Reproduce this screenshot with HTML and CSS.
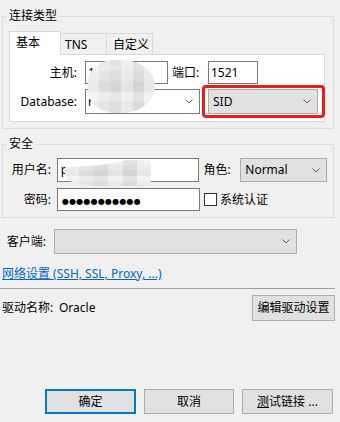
FILE: index.html
```html
<!DOCTYPE html>
<html lang="zh-CN">

<head>
  <meta charset="UTF-8">
  <title>连接设置</title>
  <link rel="stylesheet" href="styles.css">
</head>

<body>
  <div class="dialog">
    <!-- 连接类型 -->
    <fieldset class="group conn">
      <legend>连接类型</legend>
      <div class="tabs">
        <span class="tab active">基本</span>
        <span class="tab tns">TNS</span>
        <span class="tab">自定义</span>
      </div>
      <div class="panel">
        <div class="row">
          <span class="lbl">主机:</span>
          <div class="field host">1</div>
          <span class="port-lbl">端口:</span>
          <div class="field port">1521</div>
        </div>
        <div class="row">
          <span class="lbl">Database:</span>
          <div class="combo edit db"><span>r</span>
            <svg width="8" height="5" viewBox="0 0 8 5"><path d="M0.5 0.5 L4 4 L7.5 0.5" fill="none" stroke="#606060" /></svg>
          </div>
          <div class="combo sid mark"><span>SID</span>
            <svg width="8" height="5" viewBox="0 0 8 5"><path d="M0.5 0.5 L4 4 L7.5 0.5" fill="none" stroke="#606060" /></svg>
          </div>
        </div>
        <div class="blur blur-host"></div>
      </div>
    </fieldset>

    <!-- 安全 -->
    <fieldset class="group safe">
      <legend>安全</legend>
      <div class="row user-row">
        <span class="lbl2">用户名:</span>
        <div class="field user">p</div>
        <span class="role-lbl">角色:</span>
        <div class="combo role"><span>Normal</span>
          <svg width="8" height="5" viewBox="0 0 8 5"><path d="M0.5 0.5 L4 4 L7.5 0.5" fill="none" stroke="#606060" /></svg>
        </div>
        <div class="blur blur-user"></div>
      </div>
      <div class="row pass-row">
        <span class="lbl2">密码:</span>
        <div class="field pass"><span class="dots">●●●●●●●●●●●</span></div>
        <span class="check"></span>
        <span class="check-lbl">系统认证</span>
      </div>
    </fieldset>

    <!-- 客户端 -->
    <div class="row client-row">
      <span class="lbl3">客户端:</span>
      <div class="combo client"><span></span>
        <svg width="8" height="5" viewBox="0 0 8 5"><path d="M0.5 0.5 L4 4 L7.5 0.5" fill="none" stroke="#606060" /></svg>
      </div>
    </div>
    <a class="link" href="#">网络设置 (SSH, SSL, Proxy, ...)</a>
    <div class="sep"></div>
    <div class="row driver-row">
      <span class="lbl4">驱动名称:</span>
      <span>Oracle</span>
      <button class="btn edit-btn">编辑驱动设置</button>
    </div>

    <!-- operation -->
    <div class="actions">
      <button class="btn ok">确定</button>
      <button class="btn">取消</button>
      <button class="btn test"><u>测</u>试链接 ...</button>
    </div>
  </div>
</body>

</html>
```

FILE: styles.css
```css
/* reset start */
* {
  box-sizing: border-box;
}

body {
  margin: 0;
  background: #f0f0f0;
  color: #000;
  font: 12px/16px "Noto Sans", "Noto Sans CJK SC", sans-serif;
}

/* reset end */

.dialog {
  width: 340px;
  height: 422px;
  padding: 0 6px 8px 2px;
  display: flex;
  flex-direction: column;
}

.row {
  display: flex;
  align-items: center;
}

/* group start */
.group {
  margin: 8px 0 0;
  min-width: 0;
  border: 1px solid #dcdcdc;
}

.group legend {
  padding: 0 2px;
  margin-left: -2px;
  line-height: 16px;
}

.conn {
  padding: 7px 8px 6px 6px;
}

.safe {
  margin-top: 7px;
  padding: 6px 6px 6px 6px;
}

/* group end */

/* tabs start */
.tabs {
  display: flex;
  align-items: flex-end;
  height: 24px;
  margin-bottom: -1px;
  position: relative;
  z-index: 1;
}

.tab {
  height: 21px;
  width: 46px;
  margin-bottom: 1px;
  padding: 3px 0 0 6px;
  border-top: 1px solid #d9d9d9;
  border-right: 1px solid #d9d9d9;
}

.tab.tns {
  padding-left: 4px;
}

.tab.active {
  width: 52px;
  height: 24px;
  margin-bottom: 0;
  padding-top: 3px;
  border-left: 1px solid #d9d9d9;
  background: #fff;
}

.panel {
  position: relative;
  padding: 6px 0 7px;
  border: 1px solid #d9d9d9;
  background: #fff;
}

.panel .row + .row {
  margin-top: 5px;
}

/* tabs end */

/* fields start */
.lbl {
  width: 67px;
  margin-right: 8px;
  text-align: right;
}

.field {
  height: 23px;
  padding: 0 2px;
  border: 1px solid #7a7a7a;
  background: #fff;
  line-height: 21px;
}

.host {
  width: 83px;
}

.port-lbl {
  width: 36px;
  margin-left: 4px;
}

.port {
  width: 50px;
}

.combo {
  height: 25px;
  padding: 0 6px 0 4px;
  display: flex;
  align-items: center;
  justify-content: space-between;
  border: 1px solid #adadad;
  background: #e1e1e1;
}

.combo.edit {
  border-color: #7a7a7a;
  background: #fff;
  padding-left: 2px;
}

.db {
  width: 115px;
}

.sid {
  width: 110px;
  margin-left: 8px;
}

.mark {
  position: relative;
}

.mark::after {
  content: "";
  position: absolute;
  inset: -5px -8px -5px -7px;
  border: 3px solid #ef1b1b;
  border-radius: 4px;
}

/* fields end */

/* safe start */
.user-row {
  position: relative;
}

.lbl2 {
  width: 42px;
  margin-right: 6px;
  text-align: right;
}

.user {
  width: 143px;
  height: 24px;
  padding-left: 3px;
}

.role-lbl {
  width: 37px;
  margin-left: 4px;
}

.role {
  width: 87px;
  height: 24px;
}

.pass-row {
  margin-top: 6px;
}

.pass {
  width: 143px;
  padding-left: 4px;
}

.dots {
  font: 8px/21px "DejaVu Sans", sans-serif;
  letter-spacing: 0.2px;
}

.check {
  width: 13px;
  height: 13px;
  margin-left: 4px;
  border: 1px solid #333;
  background: #fff;
}

.check-lbl {
  margin-left: 3px;
}

/* safe end */

/* mosaic blur */
.blur {
  position: absolute;
  background-color: #e4e4e4;
  background-image:
    linear-gradient(90deg, rgba(255, 255, 255, .35) 0 16%, transparent 16% 33%, rgba(0, 0, 0, .03) 33% 50%, rgba(255, 255, 255, .2) 50% 67%, rgba(0, 0, 0, .04) 67% 84%, rgba(255, 255, 255, .3) 84%),
    linear-gradient(180deg, rgba(255, 255, 255, .25) 0 20%, transparent 20% 40%, rgba(0, 0, 0, .03) 40% 60%, rgba(255, 255, 255, .3) 60% 80%, transparent 80%);
}

.blur-host {
  left: 78px;
  top: 5px;
  width: 67px;
  height: 53px;
  border-radius: 40% 48% 50% 42%;
}

.blur-user {
  left: 56px;
  top: 2px;
  width: 86px;
  height: 26px;
  border-radius: 0 4px 6px 40%;
  clip-path: polygon(0 28%, 40% 20%, 62% 8%, 72% 0, 100% 0, 100% 100%, 0 100%);
}

/* client start */
.client-row {
  margin-top: 11px;
}

.lbl3 {
  width: 44px;
  margin-right: 8px;
  text-align: right;
}

.client {
  width: 243px;
}

.link {
  margin-top: 12px;
  align-self: flex-start;
  color: #0066cc;
  text-decoration: underline;
}

.sep {
  height: 1px;
  width: 335px;
  margin: 6px 0 0 -2px;
  background: #a0a0a0;
}

.driver-row {
  margin-top: 6px;
}

.lbl4 {
  width: 57px;
}

/* client end */

/* buttons start */
.btn {
  height: 25px;
  padding: 0;
  border: 1px solid #adadad;
  background: #e1e1e1;
  color: #000;
  font: inherit;
  cursor: pointer;
}

.edit-btn {
  width: 83px;
  height: 26px;
  margin-left: auto;
  margin-right: -1px;
}

.actions {
  margin-top: auto;
  display: flex;
  justify-content: flex-end;
  gap: 8px;
  padding-right: 1px;
}

.actions .btn {
  width: 90px;
}

.actions .ok {
  width: 91px;
  border: 2px solid #0078d7;
}

.actions .test {
  width: 91px;
}

/* buttons end */
```
